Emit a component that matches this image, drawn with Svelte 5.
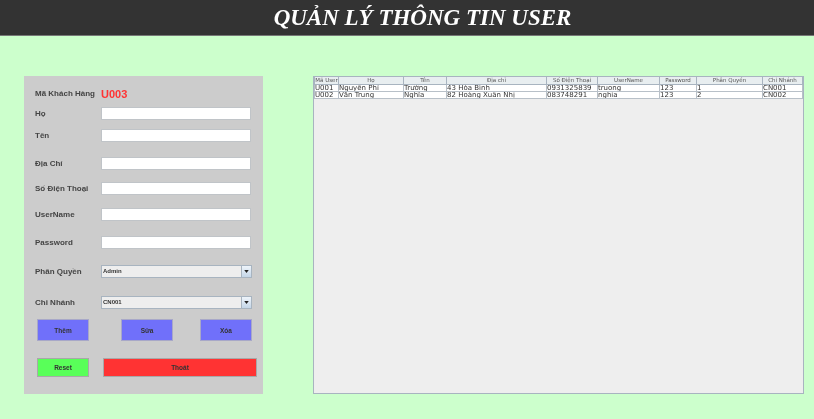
<script>
    const fields = ["Họ", "Tên", "Địa Chí", "Số Điện Thoại", "UserName", "Password"];
    const selects = [
        { label: "Phân Quyền", value: "Admin" },
        { label: "Chi Nhánh", value: "CN001" }
    ];
    const columns = ["Mã User", "Họ", "Tên", "Địa chỉ", "Số Điện Thoại", "UserName", "Password", "Phân Quyền", "Chi Nhánh"];
    const users = [
        ["U001", "Nguyễn Phí", "Trường", "43 Hòa Bình", "0931325839", "truong", "123", "1", "CN001"],
        ["U002", "Văn Trung", "Nghĩa", "82 Hoàng Xuân Nhị", "083748291", "nghia", "123", "2", "CN002"]
    ];
</script>

<div class="page">
    <header class="top">
        <h1>QUẢN LÝ THÔNG TIN USER</h1>
    </header>

    <main class="content">
        <section class="panel">
            <div class="rows">
                <div class="row">
                    <span class="label">Mã Khách Hàng</span>
                    <span class="code">U003</span>
                </div>
                {#each fields as field}
                    <div class="row">
                        <span class="label">{field}</span>
                        <input class="text" type="text" />
                    </div>
                {/each}
                {#each selects as sel}
                    <div class="row">
                        <span class="label">{sel.label}</span>
                        <div class="combo">
                            <span class="comboVal">{sel.value}</span>
                            <span class="comboBut">
                                <svg width="5" height="3" viewBox="0 0 6 4"><path d="M0 0H6L3 4Z" fill="#222" /></svg>
                            </span>
                        </div>
                    </div>
                {/each}
            </div>

            <div class="actions">
                <button class="btn blue">Thêm</button>
                <button class="btn blue">Sửa</button>
                <button class="btn blue">Xóa</button>
            </div>
            <div class="actions2">
                <button class="btn green">Reset</button>
                <button class="btn red">Thoát</button>
            </div>
        </section>

        <section class="tableBox">
            <table>
                <colgroup>
                    <col style="width: 24px" />
                    <col style="width: 65px" />
                    <col style="width: 43px" />
                    <col style="width: 100px" />
                    <col style="width: 51px" />
                    <col style="width: 62px" />
                    <col style="width: 37px" />
                    <col style="width: 66px" />
                    <col />
                </colgroup>
                <thead>
                    <tr>
                        {#each columns as col}
                            <th>{col}</th>
                        {/each}
                    </tr>
                </thead>
                <tbody>
                    {#each users as user}
                        <tr>
                            {#each user as cell}
                                <td>{cell}</td>
                            {/each}
                        </tr>
                    {/each}
                </tbody>
            </table>
        </section>
    </main>
</div>

<style>
    :global(body) {
        margin: 0;
        background: #ccffcc;
    }
    .page {
        width: 814px;
        height: 419px;
        overflow: hidden;
        background: #ccffcc;
        font-family: "Liberation Sans", sans-serif;
        filter: blur(0.3px);
    }
    .top {
        height: 35px;
        box-sizing: content-box;
        padding-left: 31px;
        background: #333333;
        border-bottom: 1px solid #777;
        display: flex;
        justify-content: center;
        align-items: center;
    }
    h1 {
        margin: 0;
        font-family: "Liberation Serif", serif;
        font-style: italic;
        font-weight: bold;
        font-size: 23px;
        color: #ffffff;
    }
    .content {
        display: flex;
        align-items: flex-start;
        padding: 40px 10px 0 24px;
        gap: 50px;
    }
    .panel {
        width: 239px;
        height: 318px;
        box-sizing: border-box;
        background: #cccccc;
        padding-top: 10px;
    }
    .rows {
        display: grid;
        grid-template-rows: 15px 24px 20px 36px 15px 36px 20px 39px 22px;
    }
    .row {
        display: flex;
        align-items: center;
        padding-left: 11px;
    }
    .label {
        width: 66px;
        font-size: 8px;
        font-weight: bold;
        color: #444444;
        white-space: nowrap;
    }
    .code {
        font-size: 11px;
        font-weight: bold;
        color: #ff3333;
    }
    .text {
        width: 150px;
        height: 13px;
        box-sizing: border-box;
        padding: 0;
        background: #ffffff;
        border: 1px solid #c0c4c8;
        outline: none;
    }
    .combo {
        width: 151px;
        height: 13px;
        box-sizing: border-box;
        display: flex;
        background: #eeeeee;
        border: 1px solid #a8b4c0;
    }
    .comboVal {
        flex: 1;
        padding-left: 1px;
        font-size: 6px;
        font-weight: bold;
        line-height: 11px;
        color: #333333;
    }
    .comboBut {
        width: 9px;
        display: flex;
        align-items: center;
        justify-content: center;
        border-left: 1px solid #a8b4c0;
        background: linear-gradient(#eef4fa, #c4d6e8);
    }
    .actions {
        display: flex;
        gap: 28px;
        margin-top: 6px;
        padding-left: 13px;
    }
    .actions .btn:nth-child(2) {
        margin-left: 4px;
    }
    .actions .btn:nth-child(3) {
        margin-left: -1px;
    }
    .actions2 {
        display: flex;
        gap: 14px;
        margin-top: 17px;
        padding-left: 13px;
    }
    .btn {
        width: 52px;
        padding: 0;
        font-family: "Liberation Sans", sans-serif;
        font-size: 6.5px;
        font-weight: bold;
        color: #333333;
        border: 1px solid #a8a8c8;
    }
    .blue {
        height: 22px;
        background: #7070fa;
    }
    .green {
        height: 19px;
        background: #59ff59;
        border-color: #a8a8a8;
    }
    .red {
        width: 154px;
        height: 19px;
        background: #ff3333;
        border-color: #a8a8a8;
    }
    .tableBox {
        width: 491px;
        height: 318px;
        box-sizing: border-box;
        background: #eeeeee;
        border: 1px solid #a8b4c0;
    }
    table {
        width: 100%;
        table-layout: fixed;
        border-collapse: collapse;
        font-family: "DejaVu Sans", sans-serif;
    }
    th {
        height: 7px;
        padding: 0;
        font-size: 5.5px;
        font-weight: normal;
        line-height: 7px;
        color: #555555;
        background: #e8eef0;
        border: 1px solid #a8b4c0;
        border-top: 0;
        white-space: nowrap;
        overflow: hidden;
    }
    td {
        height: 6px;
        padding: 0;
        font-size: 7px;
        line-height: 6px;
        color: #333333;
        background: #ffffff;
        border: 1px solid #b8c0c8;
        white-space: nowrap;
        overflow: hidden;
    }
</style>
